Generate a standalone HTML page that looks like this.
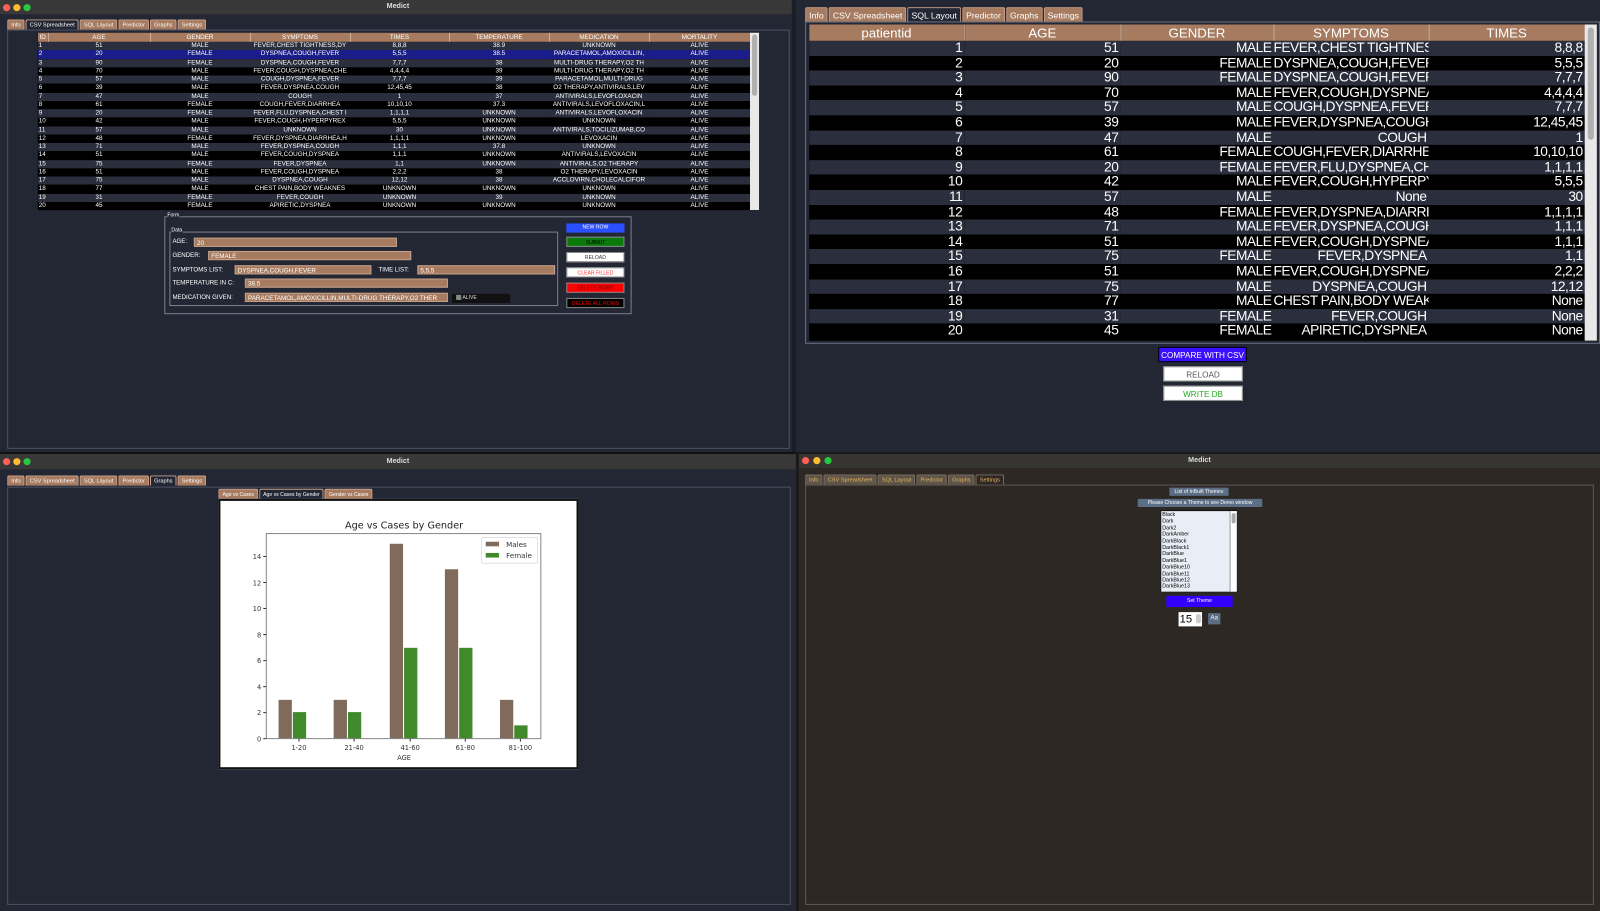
<!DOCTYPE html>
<html><head><meta charset="utf-8"><style>
*{box-sizing:border-box;margin:0;padding:0}
body{width:1600px;height:911px;overflow:hidden;background:#232734;font-family:"Liberation Sans",Arial,sans-serif}
#s{position:absolute;left:0;top:0;width:1568px;height:893px;transform:scale(1.0204,1.0202);transform-origin:0 0}
.a{position:absolute}
.tb{background:#383838;color:#ddd;font-size:7px;text-align:center;font-weight:bold}
.dot{position:absolute;width:7px;height:7px;border-radius:50%;top:4px}
.tabs{position:absolute;display:flex;gap:1px}
.tabs span{background:#a67b60;color:#fff;font-size:5.5px;padding:2px 3px 1px;border:1px solid #c8a08a;border-bottom:none;border-radius:2px 2px 0 0;white-space:nowrap}
.tabs span.on{background:#232734}
.frm{position:absolute;border:1px solid #4a5063}
table{border-collapse:collapse;table-layout:fixed;color:#fff}
td,th{overflow:hidden;white-space:nowrap;padding:0 1px}
.t1{font-size:6.2px;width:698px}
.t1 th{background:#a67b60;height:9px;font-weight:normal;border-right:1px solid #d0b09b}
.t1 td{height:8.25px;line-height:8.25px;text-align:center}
.t1 td:first-child{text-align:left}
.t1 tr:nth-child(odd) td{background:#000}
.t1 tr:nth-child(even) td{background:#2b2f3d}
.t1 tr.sel td{background:#1b1d8a}
.t2{font-size:13.5px;width:760px;letter-spacing:-0.5px}
.t2 th{background:#a67b60;height:16px;font-weight:normal;font-size:13px;border-right:1px solid #d0b09b;letter-spacing:0}
.t2 td{height:14.6px;line-height:14.6px;text-align:right;padding:0 2px 0 0}
.t2 tr:nth-child(odd) td{background:#000}
.t2 tr:nth-child(even) td{background:#2b2f3d}
.lbl{position:absolute;color:#fff;font-size:6px}
.inp{position:absolute;background:#a67b60;color:#fff;font-size:6.2px;height:9px;line-height:9px;padding-left:2px;border:1px solid #c3a08a;overflow:hidden;white-space:nowrap}
.btn{position:absolute;font-size:5px;text-align:center;height:10px;line-height:10px;border:1px solid #888}
</style></head><body><div id="s">

<!-- TL window -->
<div class="a tb" style="left:0;top:0;width:780px;height:14px;line-height:14px">Medict</div>
<div class="dot" style="left:3px;background:#fe5f57"></div><div class="dot" style="left:13px;background:#febc2e"></div><div class="dot" style="left:23px;background:#28c840"></div>
<div class="tabs" style="left:7px;top:19px"><span>Info</span><span class="on">CSV Spreadsheet</span><span>SQL Layout</span><span>Predictor</span><span>Graphs</span><span>Settings</span></div>
<div class="frm" style="left:7px;top:29px;width:767px;height:411px"></div>
<div class="a" style="left:37px;top:32px;width:707px;height:174px;background:#000;overflow:hidden">
<table class="t1"><colgroup><col style="width:10px"><col style="width:100px"><col style="width:98px"><col style="width:98px"><col style="width:97px"><col style="width:98px"><col style="width:98px"><col style="width:99px"></colgroup>
<tr><th>ID</th><th>AGE</th><th>GENDER</th><th>SYMPTOMS</th><th>TIMES</th><th>TEMPERATURE</th><th>MEDICATION</th><th>MORTALITY</th></tr>
<tr><td>1</td><td>51</td><td>MALE</td><td>FEVER,CHEST TIGHTNESS,DY</td><td>8,8,8</td><td>38.9</td><td>UNKNOWN</td><td>ALIVE</td></tr>
<tr class="sel"><td>2</td><td>20</td><td>FEMALE</td><td>DYSPNEA,COUGH,FEVER</td><td>5,5,5</td><td>38.5</td><td>PARACETAMOL,AMOXICILLIN,</td><td>ALIVE</td></tr>
<tr><td>3</td><td>90</td><td>FEMALE</td><td>DYSPNEA,COUGH,FEVER</td><td>7,7,7</td><td>38</td><td>MULTI-DRUG THERAPY,O2 TH</td><td>ALIVE</td></tr>
<tr><td>4</td><td>70</td><td>MALE</td><td>FEVER,COUGH,DYSPNEA,CHE</td><td>4,4,4,4</td><td>39</td><td>MULTI-DRUG THERAPY,O2 TH</td><td>ALIVE</td></tr>
<tr><td>5</td><td>57</td><td>MALE</td><td>COUGH,DYSPNEA,FEVER</td><td>7,7,7</td><td>39</td><td>PARACETAMOL,MULTI-DRUG</td><td>ALIVE</td></tr>
<tr><td>6</td><td>39</td><td>MALE</td><td>FEVER,DYSPNEA,COUGH</td><td>12,45,45</td><td>38</td><td>O2 THERAPY,ANTIVIRALS,LEV</td><td>ALIVE</td></tr>
<tr><td>7</td><td>47</td><td>MALE</td><td>COUGH</td><td>1</td><td>37</td><td>ANTIVIRALS,LEVOFLOXACIN</td><td>ALIVE</td></tr>
<tr><td>8</td><td>61</td><td>FEMALE</td><td>COUGH,FEVER,DIARRHEA</td><td>10,10,10</td><td>37.3</td><td>ANTIVIRALS,LEVOFLOXACIN,L</td><td>ALIVE</td></tr>
<tr><td>9</td><td>20</td><td>FEMALE</td><td>FEVER,FLU,DYSPNEA,CHEST I</td><td>1,1,1,1</td><td>UNKNOWN</td><td>ANTIVIRALS,LEVOFLOXACIN</td><td>ALIVE</td></tr>
<tr><td>10</td><td>42</td><td>MALE</td><td>FEVER,COUGH,HYPERPYREX</td><td>5,5,5</td><td>UNKNOWN</td><td>UNKNOWN</td><td>ALIVE</td></tr>
<tr><td>11</td><td>57</td><td>MALE</td><td>UNKNOWN</td><td>30</td><td>UNKNOWN</td><td>ANTIVIRALS,TOCILIZUMAB,CO</td><td>ALIVE</td></tr>
<tr><td>12</td><td>48</td><td>FEMALE</td><td>FEVER,DYSPNEA,DIARRHEA,H</td><td>1,1,1,1</td><td>UNKNOWN</td><td>LEVOXACIN</td><td>ALIVE</td></tr>
<tr><td>13</td><td>71</td><td>MALE</td><td>FEVER,DYSPNEA,COUGH</td><td>1,1,1</td><td>37.8</td><td>UNKNOWN</td><td>ALIVE</td></tr>
<tr><td>14</td><td>51</td><td>MALE</td><td>FEVER,COUGH,DYSPNEA</td><td>1,1,1</td><td>UNKNOWN</td><td>ANTIVIRALS,LEVOXACIN</td><td>ALIVE</td></tr>
<tr><td>15</td><td>75</td><td>FEMALE</td><td>FEVER,DYSPNEA</td><td>1,1</td><td>UNKNOWN</td><td>ANTIVIRALS,O2 THERAPY</td><td>ALIVE</td></tr>
<tr><td>16</td><td>51</td><td>MALE</td><td>FEVER,COUGH,DYSPNEA</td><td>2,2,2</td><td>38</td><td>O2 THERAPY,LEVOXACIN</td><td>ALIVE</td></tr>
<tr><td>17</td><td>75</td><td>MALE</td><td>DYSPNEA,COUGH</td><td>12,12</td><td>38</td><td>ACCLOVIRN,CHOLECALCIFOR</td><td>ALIVE</td></tr>
<tr><td>18</td><td>77</td><td>MALE</td><td>CHEST PAIN,BODY WEAKNES</td><td>UNKNOWN</td><td>UNKNOWN</td><td>UNKNOWN</td><td>ALIVE</td></tr>
<tr><td>19</td><td>31</td><td>FEMALE</td><td>FEVER,COUGH</td><td>UNKNOWN</td><td>39</td><td>UNKNOWN</td><td>ALIVE</td></tr>
<tr><td>20</td><td>45</td><td>FEMALE</td><td>APIRETIC,DYSPNEA</td><td>UNKNOWN</td><td>UNKNOWN</td><td>UNKNOWN</td><td>ALIVE</td></tr>
</table>
<div class="a" style="left:698px;top:0;width:9px;height:174px;background:#e8e8e8"><div class="a" style="left:2px;top:2px;width:5px;height:60px;background:#b0b0b0;border-radius:3px"></div></div>
</div>
<div class="frm" style="left:161px;top:212px;width:458px;height:96px;border-color:#7a7f8e"></div>
<div class="lbl" style="left:164px;top:208px;background:#232734;font-size:5px">Form</div>
<div class="frm" style="left:166px;top:227px;width:381px;height:73px;border-color:#7a7f8e"></div>
<div class="lbl" style="left:168px;top:223px;background:#232734;font-size:5px">Data</div>
<div class="lbl" style="left:169px;top:234px">AGE:</div><div class="inp" style="left:190px;top:233px;width:199px">20</div>
<div class="lbl" style="left:169px;top:248px">GENDER:</div><div class="inp" style="left:204px;top:246px;width:199px">FEMALE</div>
<div class="lbl" style="left:169px;top:262px">SYMPTOMS LIST:</div><div class="inp" style="left:230px;top:260px;width:134px">DYSPNEA,COUGH,FEVER</div>
<div class="lbl" style="left:371px;top:262px">TIME LIST:</div><div class="inp" style="left:409px;top:260px;width:135px">5,5,5</div>
<div class="lbl" style="left:169px;top:275px">TEMPERATURE IN C:</div><div class="inp" style="left:240px;top:273px;width:199px">38.5</div>
<div class="lbl" style="left:169px;top:289px">MEDICATION GIVEN:</div><div class="inp" style="left:240px;top:287px;width:199px">PARACETAMOL,AMOXICILLIN,MULTI-DRUG THERAPY,O2 THER</div>
<div class="a" style="left:443px;top:288px;width:57px;height:9px;background:#111;color:#ddd;font-size:5px;line-height:9px;padding-left:4px"><span style="display:inline-block;width:5px;height:5px;background:#888;vertical-align:middle"></span> ALIVE</div>
<div class="btn" style="left:555px;top:219px;width:57px;height:9px;line-height:9px;background:#2a4fff;color:#fff;border:none">NEW ROW</div>
<div class="btn" style="left:555px;top:232px;width:57px;background:#0a7a0a;color:#000">SUBMIT</div>
<div class="btn" style="left:555px;top:247px;width:57px;background:#fff;color:#333">RELOAD</div>
<div class="btn" style="left:555px;top:262px;width:57px;background:#fff;color:#f33">CLEAR FILLED</div>
<div class="btn" style="left:555px;top:277px;width:57px;background:#f00;color:#600">DELETE ROWS</div>
<div class="btn" style="left:555px;top:292px;width:57px;background:#000;color:#f00">DELETE ALL ROWS</div>
<div class="a" style="left:776px;top:0;width:4px;height:443px;background:#1a1d26"></div>

<!-- TR window -->
<div class="tabs" style="left:789px;top:7px"><span style="font-size:8.5px;padding:2px 3px">Info</span><span style="font-size:8.5px;padding:2px 3px">CSV Spreadsheet</span><span class="on" style="font-size:8.5px;padding:2px 3px">SQL Layout</span><span style="font-size:8.5px;padding:2px 3px">Predictor</span><span style="font-size:8.5px;padding:2px 3px">Graphs</span><span style="font-size:8.5px;padding:2px 3px">Settings</span></div>
<div class="frm" style="left:789px;top:21px;width:779px;height:316px;border-color:#6a7080"></div>
<div class="a" style="left:793px;top:24px;width:772px;height:310px;background:#000;overflow:hidden">
<table class="t2"><colgroup><col style="width:152px"><col style="width:153px"><col style="width:150px"><col style="width:152px"><col style="width:153px"></colgroup>
<tr><th>patientid</th><th>AGE</th><th>GENDER</th><th>SYMPTOMS</th><th>TIMES</th></tr>
<tr><td>1</td><td>51</td><td>MALE</td><td>FEVER,CHEST TIGHTNESS</td><td>8,8,8</td></tr>
<tr><td>2</td><td>20</td><td>FEMALE</td><td>DYSPNEA,COUGH,FEVER</td><td>5,5,5</td></tr>
<tr><td>3</td><td>90</td><td>FEMALE</td><td>DYSPNEA,COUGH,FEVER</td><td>7,7,7</td></tr>
<tr><td>4</td><td>70</td><td>MALE</td><td>FEVER,COUGH,DYSPNEA,(</td><td>4,4,4,4</td></tr>
<tr><td>5</td><td>57</td><td>MALE</td><td>COUGH,DYSPNEA,FEVER</td><td>7,7,7</td></tr>
<tr><td>6</td><td>39</td><td>MALE</td><td>FEVER,DYSPNEA,COUGH</td><td>12,45,45</td></tr>
<tr><td>7</td><td>47</td><td>MALE</td><td>COUGH</td><td>1</td></tr>
<tr><td>8</td><td>61</td><td>FEMALE</td><td>COUGH,FEVER,DIARRHEA</td><td>10,10,10</td></tr>
<tr><td>9</td><td>20</td><td>FEMALE</td><td>FEVER,FLU,DYSPNEA,CHE</td><td>1,1,1,1</td></tr>
<tr><td>10</td><td>42</td><td>MALE</td><td>FEVER,COUGH,HYPERPYR</td><td>5,5,5</td></tr>
<tr><td>11</td><td>57</td><td>MALE</td><td>None</td><td>30</td></tr>
<tr><td>12</td><td>48</td><td>FEMALE</td><td>FEVER,DYSPNEA,DIARRHE</td><td>1,1,1,1</td></tr>
<tr><td>13</td><td>71</td><td>MALE</td><td>FEVER,DYSPNEA,COUGH</td><td>1,1,1</td></tr>
<tr><td>14</td><td>51</td><td>MALE</td><td>FEVER,COUGH,DYSPNEA</td><td>1,1,1</td></tr>
<tr><td>15</td><td>75</td><td>FEMALE</td><td>FEVER,DYSPNEA</td><td>1,1</td></tr>
<tr><td>16</td><td>51</td><td>MALE</td><td>FEVER,COUGH,DYSPNEA</td><td>2,2,2</td></tr>
<tr><td>17</td><td>75</td><td>MALE</td><td>DYSPNEA,COUGH</td><td>12,12</td></tr>
<tr><td>18</td><td>77</td><td>MALE</td><td>CHEST PAIN,BODY WEAKN</td><td>None</td></tr>
<tr><td>19</td><td>31</td><td>FEMALE</td><td>FEVER,COUGH</td><td>None</td></tr>
<tr><td>20</td><td>45</td><td>FEMALE</td><td>APIRETIC,DYSPNEA</td><td>None</td></tr>
</table>
<div class="a" style="left:760px;top:0;width:12px;height:310px;background:#e8e8e8"><div class="a" style="left:3px;top:3px;width:6px;height:110px;background:#b0b0b0;border-radius:3px"></div></div>
</div>
<div class="btn" style="left:1135px;top:340px;width:87px;height:15px;line-height:15px;background:#3a10ff;color:#fff;font-size:8px;border:1px solid #000">COMPARE WITH CSV</div>
<div class="btn" style="left:1140px;top:359px;width:78px;height:15px;line-height:15px;background:#fff;color:#555;font-size:8px">RELOAD</div>
<div class="btn" style="left:1140px;top:378px;width:78px;height:15px;line-height:15px;background:#fff;color:#2a2;font-size:8px">WRITE DB</div>

<!-- BL window -->
<div class="a" style="left:0;top:443px;width:780px;height:2px;background:#111"></div>
<div class="a tb" style="left:0;top:445px;width:780px;height:15px;line-height:15px">Medict</div>
<div class="dot" style="left:3px;top:449px;background:#fe5f57"></div><div class="dot" style="left:13px;top:449px;background:#febc2e"></div><div class="dot" style="left:23px;top:449px;background:#28c840"></div>
<div class="tabs" style="left:7px;top:466px"><span>Info</span><span>CSV Spreadsheet</span><span>SQL Layout</span><span>Predictor</span><span class="on">Graphs</span><span>Settings</span></div>
<div class="frm" style="left:7px;top:477px;width:768px;height:410px"></div>
<div class="tabs" style="left:214px;top:479px"><span style="font-size:5px">Age vs Cases</span><span class="on" style="font-size:5px">Age vs Cases by Gender</span><span style="font-size:5px">Gender vs Cases</span></div>
<div class="a" style="left:214px;top:489px;width:353px;height:265px;background:#fff;border:2px solid #111"></div>
<svg class="a" style="left:215px;top:490px" width="351" height="263" viewBox="215 490 351 263" font-family="DejaVu Sans,sans-serif">
<text x="396" y="518" font-size="9.5" text-anchor="middle" fill="#222">Age vs Cases by Gender</text>
<g fill="#7f6a5b">
<rect x="273" y="686" width="13" height="38"/><rect x="327" y="686" width="13" height="38"/><rect x="382" y="533" width="13" height="191"/><rect x="436" y="558" width="13" height="166"/><rect x="490" y="686" width="13" height="38"/></g>
<g fill="#418a2c">
<rect x="287" y="698" width="13" height="26"/><rect x="341" y="698" width="13" height="26"/><rect x="396" y="635" width="13" height="89"/><rect x="450" y="635" width="13" height="89"/><rect x="504" y="711" width="13" height="13"/></g>
<rect x="261" y="523" width="269" height="201" fill="none" stroke="#888" stroke-width="1"/>
<g font-size="6.5" fill="#333" text-anchor="end">
<text x="256" y="727">0</text><text x="256" y="701">2</text><text x="256" y="676">4</text><text x="256" y="650">6</text><text x="256" y="625">8</text><text x="256" y="599">10</text><text x="256" y="574">12</text><text x="256" y="548">14</text></g>
<g stroke="#333"><path d="M258 724h3M258 698.5h3M258 673h3M258 647.5h3M258 622h3M258 596.5h3M258 571h3M258 545.5h3M293 724v3M347 724v3M402 724v3M456 724v3M510 724v3"/></g>
<g font-size="6.5" fill="#333" text-anchor="middle">
<text x="293" y="735">1-20</text><text x="347" y="735">21-40</text><text x="402" y="735">41-60</text><text x="456" y="735">61-80</text><text x="510" y="735">81-100</text><text x="396" y="745">AGE</text></g>
<rect x="472" y="527" width="55" height="25" fill="#fff" stroke="#ccc" stroke-width=".6" rx="1"/>
<rect x="476" y="531" width="13" height="4.5" fill="#7f6a5b"/><rect x="476" y="542" width="13" height="4.5" fill="#418a2c"/>
<g font-size="7" fill="#333"><text x="496" y="536">Males</text><text x="496" y="547">Female</text></g>
</svg>

<!-- BR window -->
<div class="a" style="left:780px;top:443px;width:788px;height:450px;background:#1a1a1a"></div>
<div class="a tb" style="left:783px;top:445px;width:785px;height:14px;line-height:14px;background:#363532">Medict</div>
<div class="dot" style="left:786px;top:448px;background:#fe5f57"></div><div class="dot" style="left:797px;top:448px;background:#febc2e"></div><div class="dot" style="left:808px;top:448px;background:#28c840"></div>
<div class="a" style="left:783px;top:459px;width:785px;height:434px;background:#2d2824"></div>
<div class="tabs" style="left:789px;top:465px"><span style="background:#5e5448;color:#e8b860;border-color:#7a6e60">Info</span><span style="background:#5e5448;color:#e8b860;border-color:#7a6e60">CSV Spreadsheet</span><span style="background:#5e5448;color:#e8b860;border-color:#7a6e60">SQL Layout</span><span style="background:#5e5448;color:#e8b860;border-color:#7a6e60">Predictor</span><span style="background:#5e5448;color:#e8b860;border-color:#7a6e60">Graphs</span><span style="background:#2d2824;color:#e8b860;border-color:#7a6e60">Settings</span></div>
<div class="frm" style="left:789px;top:475px;width:773px;height:412px;border-color:#5e5850"></div>
<div class="a" style="left:1146px;top:478px;width:58px;height:8px;background:#5c6e86;color:#fff;font-size:5px;line-height:8px;text-align:center">List of InBuilt Themes</div>
<div class="a" style="left:1115px;top:489px;width:122px;height:8px;background:#5c6e86;color:#fff;font-size:5px;line-height:8px;text-align:center;white-space:nowrap">Please Choose a Theme  to see Demo window</div>
<div class="a" style="left:1137px;top:500px;width:76px;height:81px;background:#e8eef5;border:1px solid #000;font-size:5.2px;line-height:6.4px;color:#000;padding-left:1px;padding-top:1px;overflow:hidden">Black<br>Dark<br>Dark2<br>DarkAmber<br>DarkBlack<br>DarkBlack1<br>DarkBlue<br>DarkBlue1<br>DarkBlue10<br>DarkBlue11<br>DarkBlue12<br>DarkBlue13
<div class="a" style="left:67px;top:0;width:8px;height:79px;background:#fff;border-left:1px solid #999"><div class="a" style="left:1px;top:2px;width:4px;height:10px;background:#aaa;border-radius:2px"></div></div></div>
<div class="a" style="left:1143px;top:584px;width:65px;height:11px;background:#3300ff;color:#fff;font-size:5px;line-height:11px;text-align:center">Set Theme</div>
<div class="a" style="left:1155px;top:600px;width:23px;height:14px;background:#fff;color:#000;font-size:11px;line-height:14px;padding-left:1px">15<span style="position:absolute;right:1px;top:2px;width:5px;height:9px;background:#ccc;border-radius:2px"></span></div>
<div class="a" style="left:1184px;top:601px;width:12px;height:11px;background:#5c6e86;color:#fff;font-size:6px;line-height:11px;text-align:center">Aa</div>
</div></body></html>
